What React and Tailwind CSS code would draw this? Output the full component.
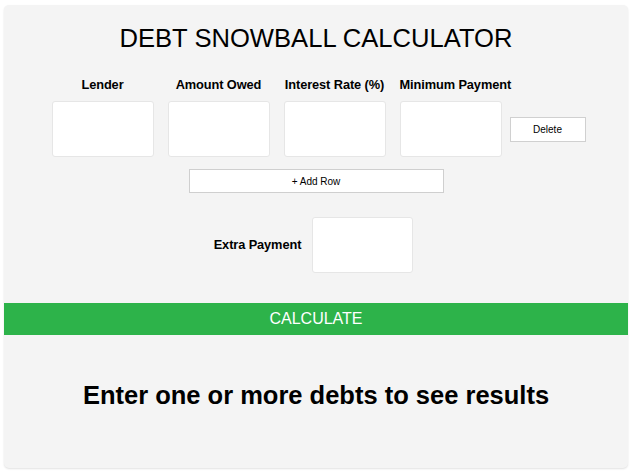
export default function App() {
  const columns = ["Lender", "Amount Owed", "Interest Rate (%)", "Minimum Payment"];

  return (
    <div className="min-h-screen bg-white pt-[5px] px-[4px] font-['Liberation_Sans',Arial,sans-serif] text-black">
      <div className="w-[624px] h-[463px] rounded-[5px] bg-[#f4f4f4] shadow-[0_1px_2px_rgba(0,0,0,0.12)] overflow-hidden flex flex-col items-center pt-[18px]">
        <h1 className="text-[25.6px] leading-[30px] font-normal">DEBT SNOWBALL CALCULATOR</h1>

        {/* Debt rows */}
        <div className="mt-[24px] flex flex-col items-center pl-[5px]">
          <div className="flex gap-[14px] pr-[84px]">
            {columns.map((c) => (
              <div key={c} className="w-[102px] text-center text-[12.8px] leading-[16px] font-bold whitespace-nowrap tracking-[-0.1px]">
                {c}
              </div>
            ))}
          </div>

          <div className="mt-[8px] flex items-center">
            <div className="flex gap-[14px]">
              {columns.map((c) => (
                <input
                  key={c}
                  className="w-[102px] h-[56px] bg-white border border-[#e6e6e6] rounded-[3px] outline-none"
                />
              ))}
            </div>
            <button className="ml-[8px] w-[76px] h-[25px] bg-white border border-[#d0d0d0] text-[10px] text-black">
              Delete
            </button>
          </div>
        </div>

        <button className="mt-[12px] w-[255px] h-[24px] bg-white border border-[#cfcfcf] text-[10px] text-black">
          + Add Row
        </button>

        {/* Extra payment */}
        <div className="mt-[24px] flex items-center gap-[11px] pr-[5px]">
          <label className="text-[12.8px] leading-[16px] font-bold tracking-[-0.1px]">Extra Payment</label>
          <input className="w-[101px] h-[56px] bg-white border border-[#e6e6e6] rounded-[3px] outline-none" />
        </div>

        <button className="mt-[30px] w-full h-[32px] bg-[#2db34a] text-white text-[16px] leading-[32px] flex items-center justify-center">
          CALCULATE
        </button>

        <div className="mt-[46px] text-[25.5px] leading-[28px] font-bold">
          Enter one or more debts to see results
        </div>
      </div>
    </div>
  );
}
